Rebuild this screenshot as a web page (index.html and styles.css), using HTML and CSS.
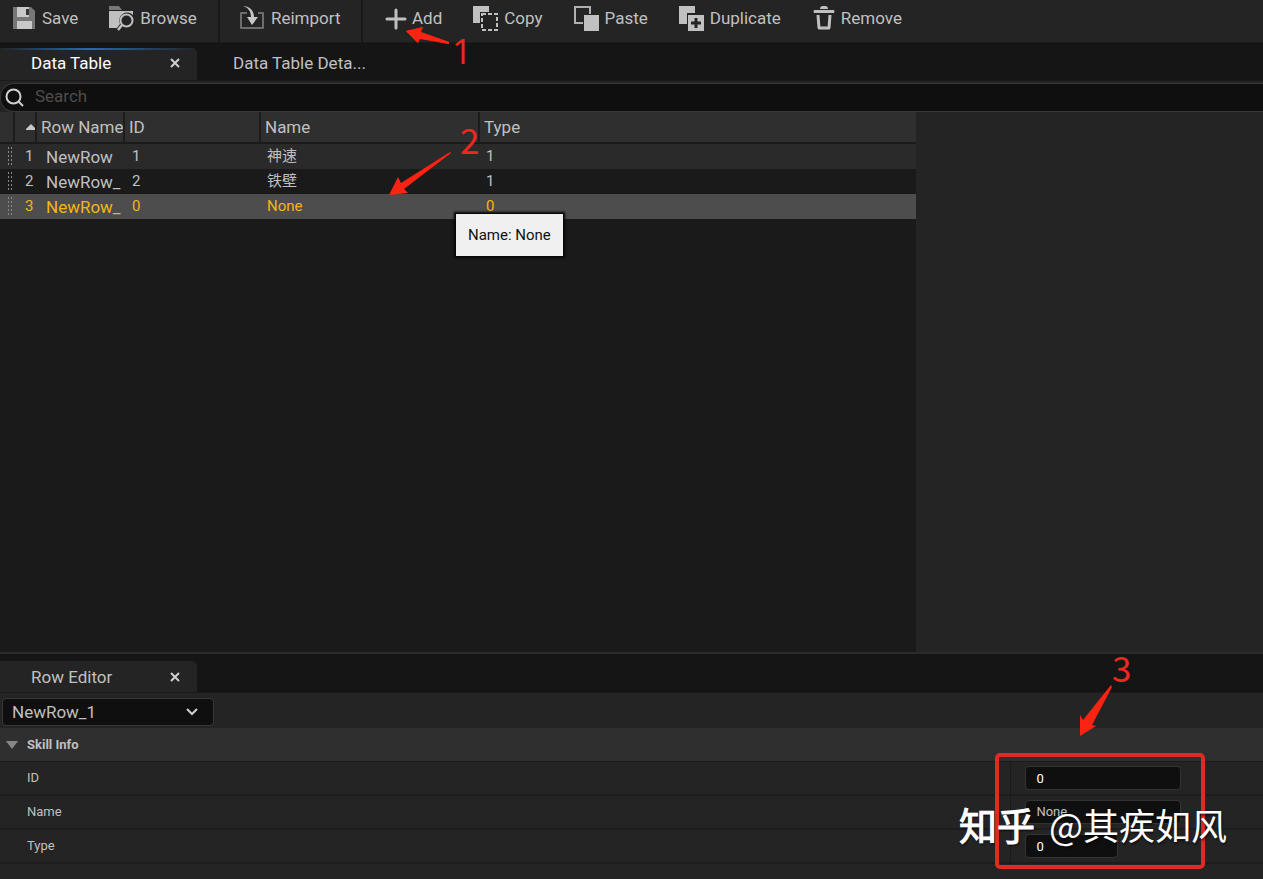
FILE: index.html
```html
<!DOCTYPE html>
<html lang="en">
<head>
<meta charset="utf-8">
<title>Data Table</title>
<link rel="stylesheet" href="styles.css">
</head>
<body>
<div class="editor">
  <header class="toolbar">
    <div class="group group-file">
      <button class="tool"><svg class="icon" width="24" height="26" viewBox="0 0 24 26"><path fill="#777" d="M1 2h18l4 4v18H1z"/><path fill="#c8c8c8" d="M5 2h12v10H5zM5 16h15v8H5z"/><path fill="#333" d="M14 4h3v6h-3z"/></svg>Save</button>
      <button class="tool browse"><svg class="icon" width="26" height="26" viewBox="0 0 26 26"><path fill="#777" d="M1 1h10l3 4H1z"/><path fill="#c0c0c0" d="M1 6h24v4a8 8 0 0 0-13 9l-3 4H1z"/><circle cx="18.500" cy="15.500" r="6" fill="none" stroke="#c0c0c0" stroke-width="2"/><path stroke="#c0c0c0" stroke-width="2.500" d="m14 20-4 5"/></svg>Browse</button>
    </div>
    <div class="group group-import">
      <button class="tool reimport"><svg class="icon" width="26" height="26" viewBox="0 0 26 26"><path fill="none" stroke="#6d6d6d" stroke-width="2" stroke-linejoin="round" d="M8 8H2v15h22V8h-5"/><path fill="#c8c8c8" d="M4 1c7 0 11 5 11 11h4l-6 8-5-8h4c0-5-2-9-8-11z"/></svg>Reimport</button>
    </div>
    <div class="group group-rows">
      <button class="tool add"><svg class="icon" width="22" height="26" viewBox="0 0 22 26"><path stroke="#c0c0c0" stroke-width="3" stroke-linecap="round" d="M11 5v18M2 14h18"/></svg>Add</button>
      <button class="tool copy"><svg class="icon" width="26" height="26" viewBox="0 0 26 26"><path fill="#c0c0c0" d="M0 1h16v6H7v11H0z"/><rect x="9" y="9" width="15" height="16" fill="none" stroke="#c0c0c0" stroke-width="2" stroke-dasharray="4 2"/></svg>Copy</button>
      <button class="tool paste"><svg class="icon" width="26" height="26" viewBox="0 0 26 26"><path fill="none" stroke="#b0b0b0" stroke-width="2" d="M9 18H1V2h15v7"/><path fill="#c0c0c0" d="M10 10h15v16H10z"/></svg>Paste</button>
      <button class="tool duplicate"><svg class="icon" width="26" height="26" viewBox="0 0 26 26"><path fill="#c0c0c0" d="M0 1h16v7H8v11H0zM9 10h16v16H9z"/><path stroke="#242424" stroke-width="3" d="M17 13v10M12 18h10"/></svg>Duplicate</button>
      <button class="tool remove"><svg class="icon" width="24" height="26" viewBox="0 0 24 26"><path fill="#c0c0c0" d="M8 4q0-3 3-3h2q3 0 3 3zM2 5h20q1 2 0 3H2q-1-1 0-3z"/><path fill="none" stroke="#c0c0c0" stroke-width="3" stroke-linejoin="round" d="m6 10 1 13h10l1-13"/></svg>Remove</button>
    </div>
  </header>

  <nav class="tabs">
    <div class="tab tab-active"><button class="tab-label">Data Table</button><button class="close" aria-label="Close Data Table"><svg width="10" height="10" viewBox="0 0 10 10"><path stroke="#d0d0d0" stroke-width="2" d="m1 1 8 8M9 1 1 9"/></svg></button></div>
    <button class="tab-idle">Data Table Deta...</button>
  </nav>

  <div class="search">
    <svg width="20" height="20" viewBox="0 0 20 20"><circle cx="8.500" cy="8.500" r="7" fill="none" stroke="#d0d0d0" stroke-width="2"/><path stroke="#d0d0d0" stroke-width="2" d="m13 13 5 5"/></svg>
    <input type="text" placeholder="Search" aria-label="Search">
  </div>

  <main class="table-area">
    <div class="table-pane">
      <table class="rows">
        <colgroup><col class="c-handle"><col class="c-index"><col class="c-row"><col class="c-id"><col class="c-name"><col></colgroup>
        <thead><tr><th></th><th class="sort"><svg width="10" height="6" viewBox="0 0 10 6"><path fill="#c8c8c8" d="M5 0 10 5v1H0V5z"/></svg></th><th>Row Name</th><th>ID</th><th>Name</th><th>Type</th></tr></thead>
        <tbody>
          <tr class="odd"><td><i class="grip"></i></td><td class="index">1</td><td class="row-name">NewRow</td><td>1</td><td class="text">神速</td><td class="text">1</td></tr>
          <tr><td><i class="grip"></i></td><td class="index">2</td><td class="row-name">NewRow_</td><td>2</td><td class="text">铁壁</td><td class="text">1</td></tr>
          <tr class="selected"><td><i class="grip"></i></td><td class="index">3</td><td class="row-name">NewRow_</td><td>0</td><td class="text">None</td><td class="text">0</td></tr>
        </tbody>
      </table>
    </div>
  </main>

  <nav class="tabs tabs-bottom">
    <div class="tab"><button class="tab-label">Row Editor</button><button class="close" aria-label="Close Row Editor"><svg width="10" height="10" viewBox="0 0 10 10"><path stroke="#d0d0d0" stroke-width="2" d="m1 1 8 8M9 1 1 9"/></svg></button></div>
  </nav>

  <section class="row-editor">
    <div class="picker">
      <div class="select-box">
        <select aria-label="Row"><option>NewRow_1</option></select>
        <svg class="chevron" width="12" height="8" viewBox="0 0 12 8"><path fill="none" stroke="#d0d0d0" stroke-width="2" d="m1 1 5 5 5-5"/></svg>
      </div>
    </div>
    <button class="category"><svg width="12" height="8" viewBox="0 0 12 8"><path fill="#888" d="M0 0h12L6 8z"/></svg>Skill Info</button>
    <div class="prop"><label for="p-id">ID</label><div class="value"><input id="p-id" type="text" value="0"></div></div>
    <div class="prop"><label for="p-name">Name</label><div class="value"><input id="p-name" class="muted" type="text" value="None"></div></div>
    <div class="prop"><label for="p-type">Type</label><div class="value"><input id="p-type" class="short" type="text" value="0"></div></div>
  </section>

  <div class="tooltip" role="tooltip">Name: None</div>
  <svg class="notes" width="1263" height="879" viewBox="0 0 1263 879">
    <g fill="#fc2312">
      <path d="M406 31 423 27 421 32 449 42 449 44 430 40 416 38 418 43z"/>
      <path d="M406 31 423 27 420 32 449 42 449 44 420 39 418 43z"/>
      <path d="M389 195 398 177 401 183 450 152 451 153 404 189 408 193z"/>
      <path d="M1080 736V715L1083 720 1111 685 1112 687 1092 725 1096 726z"/>
    </g>
    <rect x="997" y="755" width="206" height="112" rx="3" fill="none" stroke="#e02b20" stroke-width="4"/>
    <g class="digits"><text class="one" x="452" y="64">1</text><text x="460" y="154">2</text><text x="1112" y="682">3</text></g>
  </svg>
  <div class="watermark"><span class="brand">知乎</span><span>@其疾如风</span></div>
</div>
</body>
</html>
```
FILE: styles.css
```css
* { box-sizing: border-box; }
body { margin: 0; background: #242424; color: #c0c0c0; font: 17px/20px Roboto, "Noto Sans CJK SC", sans-serif; }
button, input, select { font: inherit; color: inherit; border: 0; margin: 0; padding: 0; background: none; }
button { cursor: pointer; }
svg { display: block; flex: none; }

.editor { position: relative; display: flex; flex-direction: column; min-height: 100vh; overflow: hidden; }

.toolbar { display: flex; height: 43px; border-bottom: 1px solid #1a1a1a; }
.group { display: flex; align-items: flex-start; padding-top: 5px; }
.group + .group { border-left: 2px solid #191919; }
.group-file { width: 218px; padding-left: 12px; gap: 30px; }
.group-import { width: 143px; padding-left: 19px; }
.group-rows { padding-left: 22px; gap: 31px; }
.tool { display: flex; align-items: center; gap: 6px; height: 26px; white-space: nowrap; }
.group-rows .tool { gap: 5px; }

.tabs { display: flex; align-items: flex-end; height: 38px; background: #151515; border-bottom: 1px solid #1a1a1a; }
.tab { display: flex; align-items: center; justify-content: space-between; width: 197px; height: 32px; padding: 0 17px 2px 31px; background: #242424; border-radius: 0 5px 0 0; }
.tab-active { color: #fff; background: linear-gradient(90deg, #242424, #2569b5 45%, #242424) top / 100% 2px no-repeat #242424; }
.tab-idle { height: 32px; padding: 0 36px 2px; }
.tabs-bottom { height: 41px; border-top: 2px solid #2a2a2a; }
.tabs-bottom .tab { height: 31px; padding-bottom: 0; }

.search { display: flex; align-items: center; gap: 10px; height: 29px; margin: 2px 0 0; padding-left: 4px; background: #0f0f0f; border: 1px solid #383838; border-width: 1px 0 1px 1px; border-radius: 14px 0 0 14px; }
.search input { flex: 1; outline: 0; height: 24px; padding-bottom: 3px; }
.search input::placeholder { color: #4d4d4d; opacity: 1; }

.table-area { flex: 1; display: flex; }
.table-pane { width: 73%; max-width: 916px; background: #1a1a1a; }
.rows { width: 100%; table-layout: fixed; border-collapse: separate; border-spacing: 0; }
.c-handle { width: 15px; }
.c-index { width: 22px; }
.c-row { width: 88px; }
.c-id { width: 136px; }
.c-name { width: 219px; }
th { height: 32px; padding: 0 0 0 4px; background: #2f2f2f; border-right: 2px solid #1d1d1d; border-bottom: 2px solid #1a1a1a; text-align: left; font-weight: 400; white-space: nowrap; overflow: hidden; }
th:last-child { border-right: 0; }
.sort { padding-left: 11px; }
td { height: 25px; padding: 0 0 2px 7px; font-size: 15px; white-space: nowrap; overflow: hidden; }
.odd td { background: #2a2a2a; }
.selected td { background: #4d4d4d; color: #f5b614; }
.text { padding-left: 6px; }
.index { padding-left: 10px; }
.row-name { padding: 1px 3px 0 9px; font-size: 17px; }
.grip { display: block; width: 6px; height: 20px; background: radial-gradient(circle, #888 1px, transparent 1px) 0 0 / 3px 4px; }

.row-editor { min-height: 186px; }
.picker { padding: 5px 2px 2px; }
.select-box { position: relative; width: 212px; }
.select-box select { width: 100%; height: 28px; padding-left: 9px; appearance: none; background: #0f0f0f; border: 1px solid #383838; border-radius: 4px; }
.chevron { position: absolute; right: 16px; top: 10px; pointer-events: none; }
.category { display: flex; align-items: center; gap: 9px; width: 100%; height: 34px; padding-left: 6px; background: #2f2f2f; border-bottom: 1px solid #1a1a1a; font-size: 13px; font-weight: 700; }
.prop { display: grid; grid-template-columns: 80% 1fr; height: 34px; border-bottom: 2px solid #1c1c1c; font-size: 13px; }
.prop label { display: flex; align-items: center; padding-left: 27px; }
.value { display: flex; align-items: center; padding-left: 14px; border-left: 1px solid #1a1a1a; }
.value input { width: 156px; height: 24px; padding-left: 10px; background: #0f0f0f; border: 1px solid #333; border-radius: 4px; color: #fff; }
.value .muted { color: #c0c0c0; padding-bottom: 2px; }
.value .short { width: 93px; }

.tooltip { position: absolute; left: 455px; top: 213px; padding: 11px 12px; background: #f0f0f0; border: 1px solid #080808; box-shadow: 0 0 2px 1px #080808; color: #111; font-size: 15px; }
.notes { position: absolute; left: 0; top: 0; pointer-events: none; }
.digits { fill: #ee2820; font: 35px "Noto Sans CJK SC", sans-serif; }
.digits .one { font-family: "Open Sans", sans-serif; }
.watermark { position: absolute; left: 959px; top: 804px; display: flex; align-items: center; gap: 14px; color: #fff; font: 36px/40px "Noto Sans CJK SC", sans-serif; text-shadow: 1px 2px 2px #0008; white-space: nowrap; pointer-events: none; }
.brand { font-size: 38px; -webkit-text-stroke: 1px #fff; }
```
